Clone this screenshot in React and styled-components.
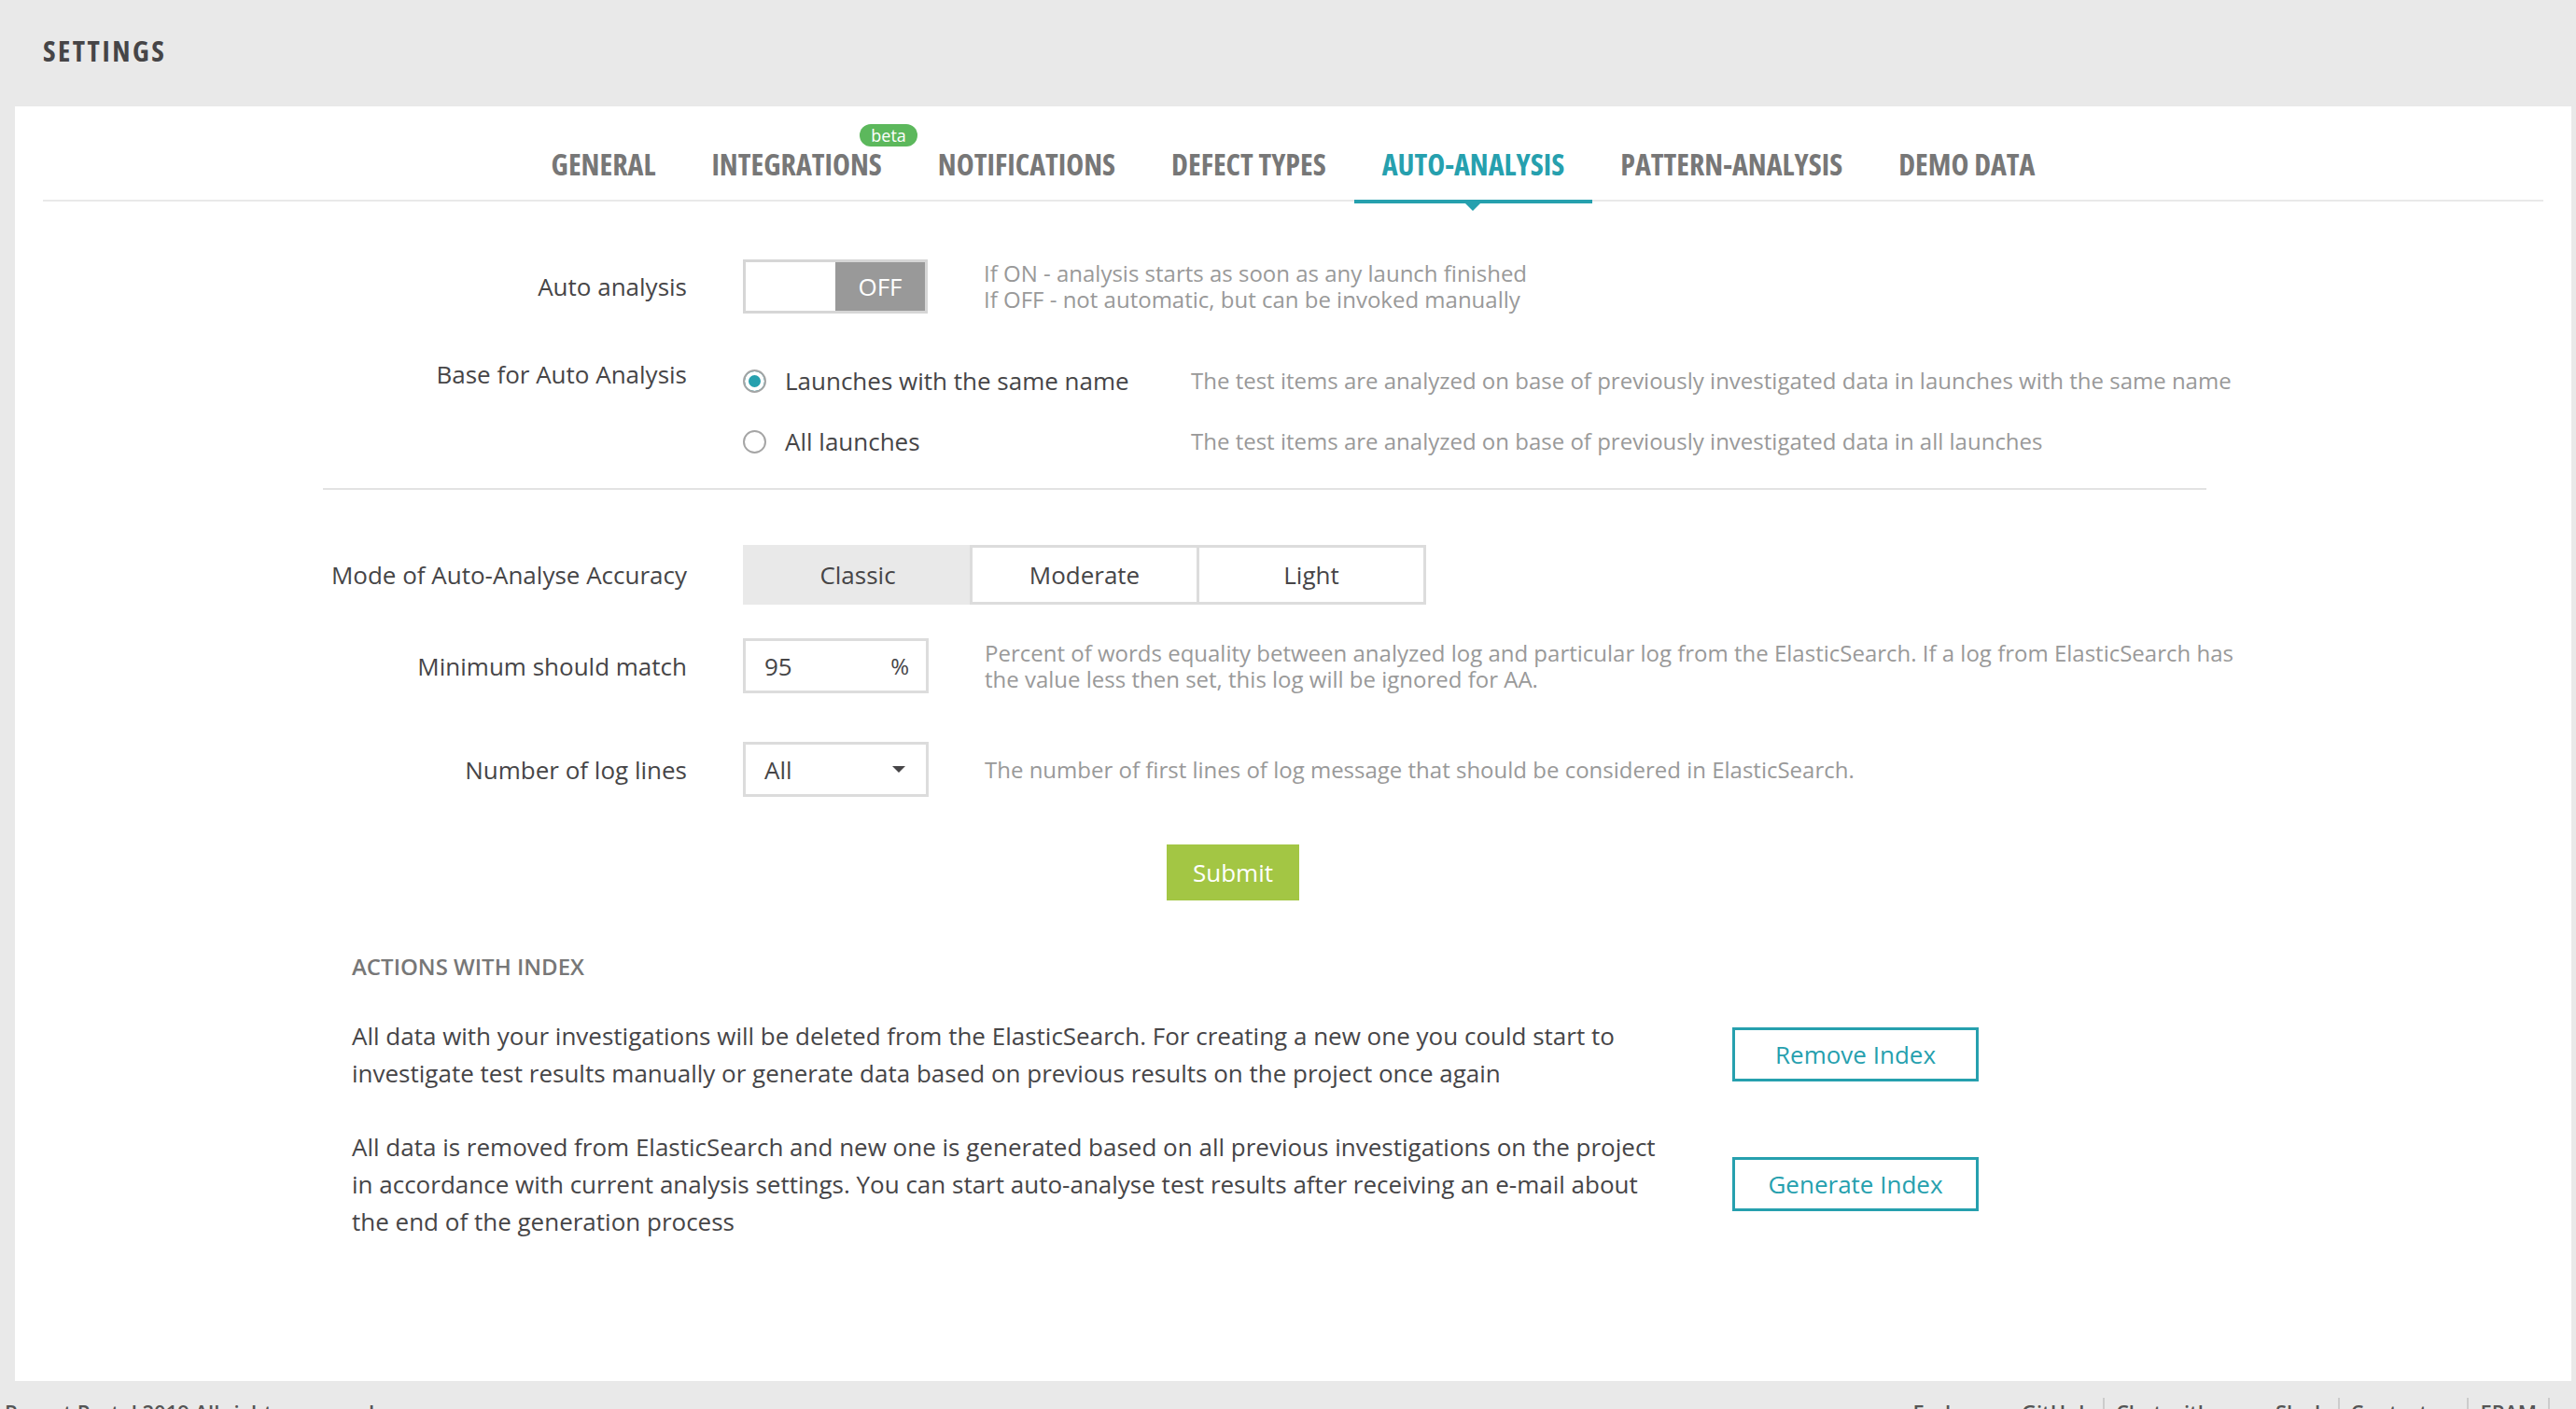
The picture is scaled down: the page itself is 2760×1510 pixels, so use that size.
import React from "react"
import styled, { createGlobalStyle } from "styled-components"

const TEAL = "#26a0ae"
const DARK = "#464547"

const GlobalStyle = createGlobalStyle`
  html, body {
    margin: 0;
    padding: 0;
  }
  body {
    height: 1510px;
    overflow: hidden;
    background: #e9e9e9;
    font-family: "Open Sans", "Liberation Sans", sans-serif;
    color: ${DARK};
  }
  * {
    box-sizing: border-box;
  }
`

const tabs = [
  "General",
  "Integrations",
  "Notifications",
  "Defect types",
  "Auto-analysis",
  "Pattern-analysis",
  "Demo data",
]

const App = () => {
  return (
    <>
      <GlobalStyle />
      <PageHeader>
        <h1>Settings</h1>
      </PageHeader>
      <Panel>
        <TabBar>
          {tabs.map((t) => (
            <Tab key={t} $active={t === "Auto-analysis"}>
              {t}
              {t === "Integrations" && <Beta>beta</Beta>}
            </Tab>
          ))}
        </TabBar>

        <Form>
          <Row>
            <Label>Auto analysis</Label>
            <Toggle>
              <span />
              <span className="off">OFF</span>
            </Toggle>
            <Help>
              If ON - analysis starts as soon as any launch finished
              <br />
              If OFF - not automatic, but can be invoked manually
            </Help>
          </Row>

          <RadioRow>
            <Label className="top">Base for Auto Analysis</Label>
            <RadioList>
              <RadioItem>
                <RadioOption>
                  <Radio $checked />
                  Launches with the same name
                </RadioOption>
                <Help>
                  The test items are analyzed on base of previously investigated data in launches with the same name
                </Help>
              </RadioItem>
              <RadioItem>
                <RadioOption>
                  <Radio />
                  All launches
                </RadioOption>
                <Help>
                  The test items are analyzed on base of previously investigated data in all launches
                </Help>
              </RadioItem>
            </RadioList>
          </RadioRow>

          <Divider />

          <Row style={{ marginTop: 59 }}>
            <Label>Mode of Auto-Analyse Accuracy</Label>
            <Segmented>
              <SegButton $active>Classic</SegButton>
              <SegButton>Moderate</SegButton>
              <SegButton>Light</SegButton>
            </Segmented>
          </Row>

          <Row style={{ marginTop: 36 }}>
            <Label>Minimum should match</Label>
            <Field>
              <span>95</span>
              <span className="unit">%</span>
            </Field>
            <Help>
              Percent of words equality between analyzed log and particular log from the ElasticSearch. If a log from ElasticSearch has
              <br />
              the value less then set, this log will be ignored for AA.
            </Help>
          </Row>

          <Row style={{ marginTop: 52 }}>
            <Label>Number of log lines</Label>
            <Field>
              <span>All</span>
              <Caret />
            </Field>
            <Help>The number of first lines of log message that should be considered in ElasticSearch.</Help>
          </Row>

          <Submit>Submit</Submit>

          <Actions>
            <ActionsTitle>Actions with index</ActionsTitle>
            <ActionRow>
              <ActionText>
                All data with your investigations will be deleted from the ElasticSearch. For creating a new one you could start to
                investigate test results manually or generate data based on previous results on the project once again
              </ActionText>
              <OutlineButton>Remove Index</OutlineButton>
            </ActionRow>
            <ActionRow>
              <ActionText>
                All data is removed from ElasticSearch and new one is generated based on all previous investigations on the project
                in accordance with current analysis settings. You can start auto-analyse test results after receiving an e-mail about
                the end of the generation process
              </ActionText>
              <OutlineButton>Generate Index</OutlineButton>
            </ActionRow>
          </Actions>
        </Form>
      </Panel>
      <Footer>
        <span>Report Portal 2019 All rights reserved</span>
        <FooterLinks>
          <span>Fork us on GitHub</span>
          <span>Chat with us on Slack</span>
          <span>Contact us</span>
          <span>EPAM</span>
        </FooterLinks>
      </Footer>
    </>
  )
}

const PageHeader = styled.header`
  height: 114px;
  display: flex;
  align-items: center;
  padding: 0 0 6px 46px;
  h1 {
    margin: 0;
    font-size: 31px;
    font-weight: 700;
    font-stretch: 75%;
    letter-spacing: 2.5px;
    text-transform: uppercase;
    color: ${DARK};
  }
`

const Panel = styled.main`
  margin: 0 5px 0 16px;
  height: 1366px;
  background: #fff;
`

const TabBar = styled.nav`
  margin: 0 30px;
  height: 102px;
  display: flex;
  justify-content: center;
  border-bottom: 2px solid #e9e9e9;
`

const Tab = styled.div`
  position: relative;
  height: 104px;
  margin-bottom: -2px;
  padding: 22px 30px 0;
  display: flex;
  align-items: center;
  border-bottom: 4px solid ${(p) => (p.$active ? TEAL : "transparent")};
  font-size: 32px;
  font-weight: 700;
  font-stretch: 75%;
  text-transform: uppercase;
  white-space: nowrap;
  color: ${(p) => (p.$active ? TEAL : "#777")};
  &::after {
    content: "";
    display: ${(p) => (p.$active ? "block" : "none")};
    position: absolute;
    left: 50%;
    bottom: -12px;
    margin-left: -8px;
    border-left: 8px solid transparent;
    border-right: 8px solid transparent;
    border-top: 8px solid ${TEAL};
  }
`

const Beta = styled.span`
  position: absolute;
  top: 19px;
  right: -8px;
  height: 24px;
  padding: 0 12px;
  border-radius: 12px;
  background: #5cb85c;
  color: #fff;
  font-size: 18px;
  font-weight: 400;
  font-stretch: 100%;
  line-height: 24px;
  text-transform: none;
`

const Form = styled.section`
  margin-left: 330px;
  width: 2018px;
  padding-top: 62px;
`

const Row = styled.div`
  display: flex;
  align-items: center;
  gap: 60px;
`

const Label = styled.div`
  flex: 0 0 390px;
  text-align: right;
  font-size: 26px;
  color: ${DARK};
  &.top {
    line-height: 40px;
    margin-top: -7px;
  }
`

const Help = styled.div`
  font-size: 24px;
  line-height: 28px;
  white-space: nowrap;
  color: #999;
`

const Toggle = styled.div`
  flex: 0 0 198px;
  height: 58px;
  display: flex;
  border: 3px solid #d6d6d6;
  span {
    flex: 1;
  }
  .off {
    background: #999;
    color: #fff;
    font-size: 26px;
    display: flex;
    align-items: center;
    justify-content: center;
  }
`

const RadioRow = styled(Row)`
  align-items: flex-start;
  margin-top: 52px;
`

const RadioList = styled.div`
  display: flex;
  flex-direction: column;
  gap: 25px;
`

const RadioItem = styled.div`
  height: 40px;
  display: flex;
  align-items: center;
`

const RadioOption = styled.label`
  flex: 0 0 480px;
  display: flex;
  align-items: center;
  gap: 20px;
  font-size: 26px;
  color: ${DARK};
`

const Radio = styled.span`
  width: 25px;
  height: 25px;
  border-radius: 50%;
  border: 2px solid #a5a5a5;
  background: ${(p) => (p.$checked ? TEAL : "#fff")};
  box-shadow: inset 0 0 0 4px #fff;
`

const Divider = styled.hr`
  margin: 30px 0 0;
  border: 0;
  height: 2px;
  background: #e3e3e3;
`

const Segmented = styled.div`
  display: flex;
`

const SegButton = styled.button`
  width: 246px;
  height: 64px;
  margin-left: -3px;
  &:first-child {
    margin-left: 0;
  }
  border: 3px solid ${(p) => (p.$active ? "#e9e9e9" : "#dcdcdc")};
  background: ${(p) => (p.$active ? "#e9e9e9" : "#fff")};
  font-family: inherit;
  font-size: 26px;
  color: ${DARK};
`

const Field = styled.div`
  flex: 0 0 199px;
  height: 59px;
  padding: 0 18px 0 20px;
  display: flex;
  align-items: center;
  justify-content: space-between;
  border: 3px solid #dcdcdc;
  font-size: 26px;
  color: ${DARK};
  .unit {
    font-size: 24px;
  }
`

const Caret = styled.span`
  margin-right: 4px;
  border-left: 7px solid transparent;
  border-right: 7px solid transparent;
  border-top: 7px solid ${DARK};
`

const Submit = styled.button`
  display: block;
  margin: 51px 0 0 904px;
  width: 142px;
  height: 60px;
  border: 0;
  background: #a3c644;
  color: #fff;
  font-family: inherit;
  font-size: 26px;
`

const Actions = styled.div`
  margin-left: 31px;
  padding-top: 54px;
`

const ActionsTitle = styled.h3`
  margin: 0 0 37px;
  font-size: 24px;
  line-height: 34px;
  font-weight: 600;
  text-transform: uppercase;
  color: #777;
`

const ActionRow = styled.div`
  display: flex;
  align-items: center;
  gap: 59px;
  & + & {
    margin-top: 39px;
  }
`

const ActionText = styled.p`
  margin: 0;
  width: 1420px;
  font-size: 26px;
  line-height: 40px;
  color: ${DARK};
`

const OutlineButton = styled.button`
  width: 264px;
  height: 58px;
  border: 3px solid ${TEAL};
  background: #fff;
  color: ${TEAL};
  font-family: inherit;
  font-size: 26px;
`

const Footer = styled.footer`
  display: flex;
  justify-content: space-between;
  padding: 18px 28px 0 5px;
  font-size: 22px;
  font-weight: 600;
  color: #555;
`

const FooterLinks = styled.div`
  display: flex;
  span {
    padding: 0 12px;
    border-right: 2px solid #ccc;
  }
`

export default App
